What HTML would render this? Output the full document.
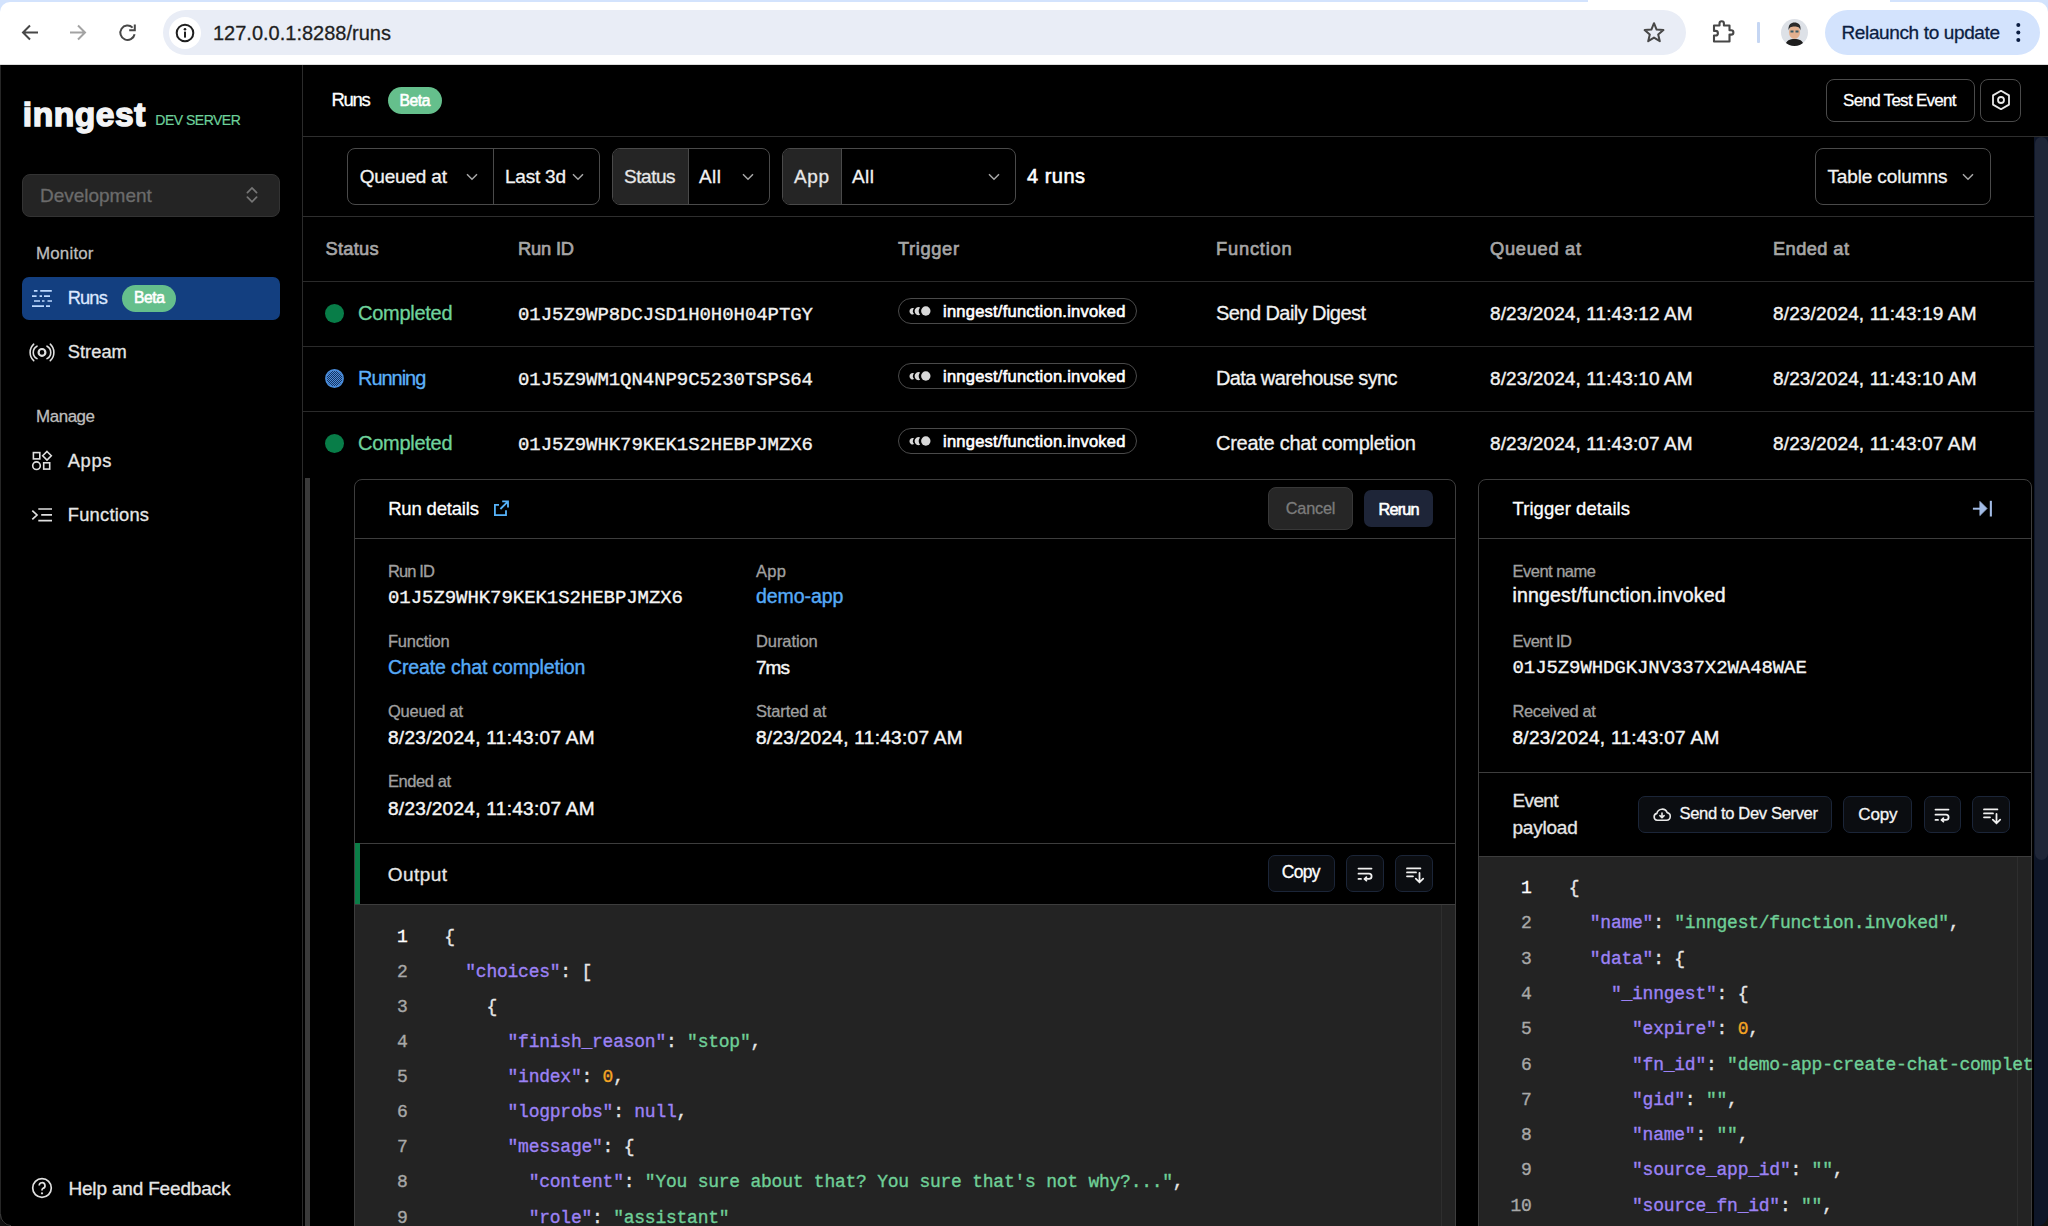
<!DOCTYPE html>
<html><head><meta charset="utf-8"><title>Runs</title>
<style>
html,body{margin:0;padding:0;background:#000;width:2048px;height:1226px;overflow:hidden;}
body{position:relative;font-family:"Liberation Sans",sans-serif;}
.t{position:absolute;white-space:pre;}
</style></head><body>
<div style="position:absolute;left:0px;top:0px;width:2048px;height:14px;background:#d3e3fd"></div>
<div style="position:absolute;left:0px;top:1.5px;width:2048px;height:63.5px;background:#fff;border-radius:10px 10px 0 0"></div>
<div style="position:absolute;left:1588px;top:0px;width:302px;height:6px;background:#fff"></div>
<div style="position:absolute;left:0px;top:64px;width:2048px;height:1px;background:#dcdcdc"></div>
<svg style="position:absolute;left:20px;top:22px;overflow:visible" width="20" height="20" viewBox="0 0 20 20"><path d="M18 10.5H3.5M10 3.5L3 10.5L10 17.5" fill="none" stroke="#474747" stroke-width="2"/></svg>
<svg style="position:absolute;left:68px;top:22px;overflow:visible" width="20" height="20" viewBox="0 0 20 20"><path d="M2 10.5H16.5M10 3.5L17 10.5L10 17.5" fill="none" stroke="#a3a3a3" stroke-width="2"/></svg>
<svg style="position:absolute;left:117px;top:22px;overflow:visible" width="22" height="22" viewBox="0 0 22 22"><path d="M17.6 12.2A7.2 7.2 0 1 1 15.6 5.6" fill="none" stroke="#474747" stroke-width="2"/><path d="M17.8 2.5V8.2H12.2" fill="none" stroke="#474747" stroke-width="2"/></svg>
<div style="position:absolute;left:163px;top:10px;width:1523px;height:45px;background:#e9edf6;border-radius:23px"></div>
<div style="position:absolute;left:169px;top:16.5px;width:32px;height:32px;background:#fff;border-radius:50%"></div>
<svg style="position:absolute;left:175px;top:22.5px;overflow:visible" width="20" height="20" viewBox="0 0 20 20"><circle cx="10" cy="10" r="8.3" fill="none" stroke="#1f1f1f" stroke-width="2"/><circle cx="10" cy="6.3" r="1.3" fill="#1f1f1f"/><rect x="9" y="8.6" width="2" height="6" fill="#1f1f1f"/></svg>
<svg style="position:absolute;left:1642px;top:21px;overflow:visible" width="24" height="22" viewBox="0 0 24 22"><path d="M12 2.2L14.6 8.6L21.4 9.1L16.2 13.5L17.8 20.2L12 16.6L6.2 20.2L7.8 13.5L2.6 9.1L9.4 8.6Z" fill="none" stroke="#474747" stroke-width="2" stroke-linejoin="round"/></svg>
<svg style="position:absolute;left:1711px;top:19px;overflow:visible" width="26" height="25" viewBox="0 0 26 25"><path d="M3 6.5H8.5V4.5A2.2 2.2 0 0 1 12.9 4.5V6.5H18.5V11.2H20.2A2.2 2.2 0 0 1 20.2 15.6H18.5V22.5H3V16.5H4.6A2.3 2.3 0 0 0 4.6 11.9H3Z" fill="none" stroke="#474747" stroke-width="2.1" stroke-linejoin="round"/></svg>
<div style="position:absolute;left:1757px;top:22px;width:2.5px;height:21px;background:#c5d6f3;border-radius:1px"></div>
<svg style="position:absolute;left:1781px;top:19px;overflow:visible" width="27" height="27" viewBox="0 0 27 27"><defs><clipPath id="av"><circle cx="13.5" cy="13.5" r="13.5"/></clipPath></defs><g clip-path="url(#av)"><rect width="27" height="27" fill="#dde1e7"/><path d="M4 27C5 21 9 20 13.5 20S22 21 23 27Z" fill="#1e1e1e"/><ellipse cx="13.5" cy="13" rx="5.6" ry="7" fill="#e3b08f"/><path d="M7.6 11.5C7 5.5 10 3.6 13.5 3.6S20.4 5.5 19.4 11.5C18.6 8.5 17 7.6 13.5 7.6S8.4 8.5 7.6 11.5Z" fill="#2a2a2a"/><rect x="9.5" y="11.5" width="3" height="2" fill="#3a5a66"/><rect x="14.5" y="11.5" width="3" height="2" fill="#3a5a66"/></g></svg>
<div style="position:absolute;left:1825px;top:10px;width:215px;height:45px;background:#d3e3fd;border-radius:23px"></div>
<svg style="position:absolute;left:2013px;top:24px;overflow:visible" width="10" height="18" viewBox="0 0 10 18"><circle cx="5.3" cy="1" r="2" fill="#0b1d41"/><circle cx="5.3" cy="8.6" r="2" fill="#0b1d41"/><circle cx="5.3" cy="16" r="2" fill="#0b1d41"/></svg>
<div style="position:absolute;left:0px;top:65px;width:1px;height:1161px;background:#262626"></div>
<div style="position:absolute;left:302px;top:65px;width:1px;height:1161px;background:#2b2b2b"></div>
<div style="position:absolute;left:22px;top:173.5px;width:258px;height:43px;background:#242424;border:1px solid #333333;border-radius:8px;box-sizing:border-box"></div>
<svg style="position:absolute;left:244px;top:185px;overflow:visible" width="16" height="20" viewBox="0 0 16 20"><path d="M3.4 7.6L8 3L12.6 7.6M3.4 12.2L8 16.8L12.6 12.2" fill="none" stroke="#767676" stroke-width="1.7" stroke-linecap="round"/></svg>
<div style="position:absolute;left:22px;top:276.5px;width:258px;height:43px;background:#133f80;border-radius:7px"></div>
<svg style="position:absolute;left:30px;top:288px;overflow:visible" width="24" height="22" viewBox="0 0 24 22"><g stroke="#bcd9ff" stroke-width="1.7"><path d="M3.9 2.8H7.5M10.2 2.8H21.8M2 8.2H6.6M9.6 8.2H12M14 8.2H20M4 13H10M12 13H14.5M17.5 13H22M2 18.2H14M16 18.2H20"/></g></svg>
<div style="position:absolute;left:122.3px;top:284.6px;width:54px;height:27px;background:#65bf8c;border-radius:14px"></div>
<svg style="position:absolute;left:28px;top:343px;overflow:visible" width="28" height="20" viewBox="0 0 28 20"><g fill="none" stroke="#e0e0e0" stroke-linecap="round"><circle cx="14" cy="9.4" r="3.4" stroke-width="2.2"/><path stroke-width="1.6" d="M5.7 1.2A11.2 11.2 0 0 0 5.7 17.6M22.3 1.2A11.2 11.2 0 0 1 22.3 17.6M9 3.2A7 7 0 0 0 9 15.6M19 3.2A7 7 0 0 1 19 15.6"/></g></svg>
<svg style="position:absolute;left:31px;top:450px;overflow:visible" width="22" height="22" viewBox="0 0 22 22"><g fill="none" stroke="#e0e0e0" stroke-width="1.6"><rect x="2.4" y="2.6" width="6.4" height="6.3"/><circle cx="5.5" cy="15.7" r="3.8"/><rect x="12.7" y="12.8" width="6" height="6.3"/><path d="M16 1.5L20.3 5.8L16 10.1L11.7 5.8Z"/></g></svg>
<svg style="position:absolute;left:30px;top:506px;overflow:visible" width="24" height="18" viewBox="0 0 24 18"><g fill="none" stroke="#e0e0e0" stroke-width="1.7"><path d="M2.3 4.6L7 9L2.3 13.4M8.3 3H22M11.2 8.8H22M8.3 14.7H22"/></g></svg>
<svg style="position:absolute;left:30px;top:1176px;overflow:visible" width="24" height="24" viewBox="0 0 24 24"><g fill="none" stroke="#e0e0e0" stroke-width="1.7"><circle cx="12" cy="12" r="9.3"/><path d="M9.2 9.6A2.9 2.9 0 1 1 12.9 12.4C12.3 12.7 12 13.2 12 13.9V14.6"/></g><circle cx="12" cy="17.3" r="1.1" fill="#e0e0e0"/></svg>
<div style="position:absolute;left:387.5px;top:87px;width:54.5px;height:26.5px;background:#65bf8c;border-radius:14px"></div>
<div style="position:absolute;left:1825.5px;top:79px;width:149px;height:43px;border:1px solid #4a4a4a;border-radius:8px;box-sizing:border-box"></div>
<div style="position:absolute;left:1980.3px;top:79px;width:40.5px;height:43px;border:1px solid #4a4a4a;border-radius:8px;box-sizing:border-box"></div>
<svg style="position:absolute;left:1990px;top:89px;overflow:visible" width="22" height="22" viewBox="0 0 22 22"><g fill="none" stroke="#e8e8e8" stroke-width="1.8"><path d="M11 1.8L19 6.4V15.6L11 20.2L3 15.6V6.4Z" stroke-linejoin="round"/><circle cx="11" cy="11" r="3"/></g></svg>
<div style="position:absolute;left:303px;top:135.5px;width:1745px;height:1px;background:#2e2e2e"></div>
<div style="position:absolute;left:347px;top:148px;width:253px;height:57px;border:1px solid #4a4a4a;border-radius:8px;box-sizing:border-box"></div>
<div style="position:absolute;left:493px;top:149px;width:1px;height:55px;background:#4a4a4a"></div>
<svg style="position:absolute;left:465.5px;top:172.5px;overflow:visible" width="12" height="8" viewBox="0 0 12 8"><path d="M1 1.2L6 6.2L11 1.2" fill="none" stroke="#a8a8a8" stroke-width="1.5"/></svg>
<svg style="position:absolute;left:572px;top:172.5px;overflow:visible" width="12" height="8" viewBox="0 0 12 8"><path d="M1 1.2L6 6.2L11 1.2" fill="none" stroke="#a8a8a8" stroke-width="1.5"/></svg>
<div style="position:absolute;left:612px;top:148px;width:158px;height:57px;border:1px solid #4a4a4a;border-radius:8px;box-sizing:border-box"></div>
<div style="position:absolute;left:613px;top:149px;width:74.5px;height:55px;background:#252525;border-radius:7px 0 0 7px"></div>
<div style="position:absolute;left:687.5px;top:149px;width:1px;height:55px;background:#4a4a4a"></div>
<svg style="position:absolute;left:741.5px;top:172.5px;overflow:visible" width="12" height="8" viewBox="0 0 12 8"><path d="M1 1.2L6 6.2L11 1.2" fill="none" stroke="#a8a8a8" stroke-width="1.5"/></svg>
<div style="position:absolute;left:782px;top:148px;width:234px;height:57px;border:1px solid #4a4a4a;border-radius:8px;box-sizing:border-box"></div>
<div style="position:absolute;left:783px;top:149px;width:58px;height:55px;background:#252525;border-radius:7px 0 0 7px"></div>
<div style="position:absolute;left:841px;top:149px;width:1px;height:55px;background:#4a4a4a"></div>
<svg style="position:absolute;left:987.5px;top:172.5px;overflow:visible" width="12" height="8" viewBox="0 0 12 8"><path d="M1 1.2L6 6.2L11 1.2" fill="none" stroke="#a8a8a8" stroke-width="1.5"/></svg>
<div style="position:absolute;left:1815px;top:148px;width:176px;height:57px;border:1px solid #4a4a4a;border-radius:8px;box-sizing:border-box"></div>
<svg style="position:absolute;left:1962px;top:172.5px;overflow:visible" width="12" height="8" viewBox="0 0 12 8"><path d="M1 1.2L6 6.2L11 1.2" fill="none" stroke="#a8a8a8" stroke-width="1.5"/></svg>
<div style="position:absolute;left:303px;top:216px;width:1731px;height:1px;background:#2e2e2e"></div>
<div style="position:absolute;left:2034px;top:137px;width:14px;height:1089px;background:#0e1628"></div>
<div style="position:absolute;left:2035px;top:137px;width:13px;height:723px;background:#1f2637;border-radius:7px"></div>
<div style="position:absolute;left:303px;top:281px;width:1731px;height:1px;background:#2a2a2a"></div>
<div style="position:absolute;left:303px;top:345.5px;width:1731px;height:1px;background:#2a2a2a"></div>
<div style="position:absolute;left:303px;top:411px;width:1731px;height:1px;background:#2a2a2a"></div>
<div style="position:absolute;left:325px;top:304px;width:19px;height:19px;background:#087d48;border-radius:50%"></div>
<div style="position:absolute;left:897.6px;top:298px;width:239.6px;height:26.3px;border:1px solid #4a4a4a;border-radius:14px;box-sizing:border-box"></div>
<svg style="position:absolute;left:907px;top:303px;overflow:visible" width="26" height="16" viewBox="0 0 26 16"><g fill="#d8d8d8"><path d="M7 5.3A3.2 3.2 0 1 0 7 11.1A4.5 4.5 0 0 1 7 5.3Z"/><path d="M13.1 4.4A4 4 0 1 0 13.1 11.8A5.5 5.5 0 0 1 13.1 4.4Z"/><circle cx="18.8" cy="8" r="4.7"/></g></svg>
<svg style="position:absolute;left:325px;top:369px;overflow:visible" width="19" height="19" viewBox="0 0 19 19"><defs><pattern id="dp" width="2" height="2" patternUnits="userSpaceOnUse"><rect width="2" height="2" fill="#17335f"/><rect width="1" height="1" fill="#4a8ddc"/><rect x="1" y="1" width="1" height="1" fill="#4a8ddc"/></pattern></defs><circle cx="9.5" cy="9.5" r="8.6" fill="url(#dp)" stroke="#4a8ddc" stroke-width="1.6"/></svg>
<div style="position:absolute;left:897.6px;top:363px;width:239.6px;height:26.3px;border:1px solid #4a4a4a;border-radius:14px;box-sizing:border-box"></div>
<svg style="position:absolute;left:907px;top:368px;overflow:visible" width="26" height="16" viewBox="0 0 26 16"><g fill="#d8d8d8"><path d="M7 5.3A3.2 3.2 0 1 0 7 11.1A4.5 4.5 0 0 1 7 5.3Z"/><path d="M13.1 4.4A4 4 0 1 0 13.1 11.8A5.5 5.5 0 0 1 13.1 4.4Z"/><circle cx="18.8" cy="8" r="4.7"/></g></svg>
<div style="position:absolute;left:325px;top:434px;width:19px;height:19px;background:#087d48;border-radius:50%"></div>
<div style="position:absolute;left:897.6px;top:428px;width:239.6px;height:26.3px;border:1px solid #4a4a4a;border-radius:14px;box-sizing:border-box"></div>
<svg style="position:absolute;left:907px;top:433px;overflow:visible" width="26" height="16" viewBox="0 0 26 16"><g fill="#d8d8d8"><path d="M7 5.3A3.2 3.2 0 1 0 7 11.1A4.5 4.5 0 0 1 7 5.3Z"/><path d="M13.1 4.4A4 4 0 1 0 13.1 11.8A5.5 5.5 0 0 1 13.1 4.4Z"/><circle cx="18.8" cy="8" r="4.7"/></g></svg>
<div style="position:absolute;left:305px;top:478px;width:5px;height:748px;background:#3a3a3a"></div>
<div style="position:absolute;left:354px;top:478.5px;width:1102px;height:900px;border:1px solid #3d3d3d;border-radius:8px;box-sizing:border-box"></div>
<div style="position:absolute;left:354px;top:538px;width:1102px;height:1px;background:#3d3d3d"></div>
<svg style="position:absolute;left:491px;top:498px;overflow:visible" width="20" height="20" viewBox="0 0 20 20"><g fill="none" stroke="#57b4fb" stroke-width="1.8"><path d="M8 6.9H3.9V17.2H15V12.2"/><path d="M11.2 3.4H17V9.4M16.8 3.6L9.4 11"/></g></svg>
<div style="position:absolute;left:1268px;top:487.4px;width:85px;height:43px;background:#262626;border:1px solid #383838;border-radius:8px;box-sizing:border-box"></div>
<div style="position:absolute;left:1364px;top:489.8px;width:69px;height:37.6px;background:#1e2538;border-radius:7px"></div>
<div style="position:absolute;left:354px;top:842.5px;width:1102px;height:1px;background:#3d3d3d"></div>
<div style="position:absolute;left:354.5px;top:843px;width:5.5px;height:61px;background:#0b7d47"></div>
<div style="position:absolute;left:1267.6px;top:854.8px;width:67.7px;height:37.4px;background:#0b0d11;border:1px solid #1b2538;border-radius:7px;box-sizing:border-box"></div>
<div style="position:absolute;left:1346.3px;top:854.8px;width:37.7px;height:37.4px;background:#0b0d11;border:1px solid #1b2538;border-radius:7px;box-sizing:border-box"></div>
<svg style="position:absolute;left:1356px;top:865px;overflow:visible" width="18" height="18" viewBox="0 0 18 18"><g fill="none" stroke="#f0f0f0" stroke-width="1.8" stroke-linecap="round"><path d="M2.5 3.6H15.5M2.5 8.7H13A2.6 2.6 0 0 1 13 13.9H9"/><path d="M2.5 13.9H5"/><path d="M10.4 12.2L8.6 13.9L10.4 15.6"/></g></svg>
<div style="position:absolute;left:1395px;top:854.8px;width:38px;height:37.4px;background:#0b0d11;border:1px solid #1b2538;border-radius:7px;box-sizing:border-box"></div>
<svg style="position:absolute;left:1405px;top:865px;overflow:visible" width="20" height="20" viewBox="0 0 20 20"><g fill="none" stroke="#f0f0f0" stroke-width="1.8" stroke-linecap="round"><path d="M2 3.4H15.4M2 7.4H11M2 11.3H8"/><path d="M14.5 8V17M10.8 13.6L14.5 17.3L18.2 13.6"/></g></svg>
<div style="position:absolute;left:354px;top:903.5px;width:1102px;height:1px;background:#3d3d3d"></div>
<div style="position:absolute;left:355px;top:904.5px;width:1100px;height:330px;background:#232323"></div>
<div style="position:absolute;left:1441px;top:904.5px;width:1px;height:330px;background:#2e2e2e"></div>
<div style="position:absolute;left:1478.3px;top:479px;width:554px;height:900px;border:1px solid #3d3d3d;border-radius:8px;box-sizing:border-box"></div>
<div style="position:absolute;left:1478.3px;top:538px;width:554px;height:1px;background:#3d3d3d"></div>
<svg style="position:absolute;left:1970px;top:498px;overflow:visible" width="24" height="22" viewBox="0 0 24 22"><g fill="#a3bce6" stroke="#a3bce6"><path d="M2.9 10.7H10.5" stroke-width="2"/><path d="M9.9 3.4L17 10.5L9.9 17.6Z" stroke-width="0.8" stroke-linejoin="round"/><path d="M20.85 2.8V18.5" stroke-width="2.1"/></g></svg>
<div style="position:absolute;left:1478.3px;top:772px;width:554px;height:1px;background:#3d3d3d"></div>
<div style="position:absolute;left:1638px;top:795.5px;width:194px;height:37.4px;background:#0b0d11;border:1px solid #1b2538;border-radius:7px;box-sizing:border-box"></div>
<svg style="position:absolute;left:1652px;top:805px;overflow:visible" width="20" height="18" viewBox="0 0 20 18"><g fill="none" stroke="#e8e8e8" stroke-width="1.6" stroke-linecap="round" stroke-linejoin="round"><path d="M5.2 15.3H14.6A3.9 3.9 0 0 0 15.2 7.6A5.4 5.4 0 0 0 4.9 8.4A3.5 3.5 0 0 0 5.2 15.3Z"/><path d="M10 8V12.6M7.9 10.6L10 12.7L12.1 10.6"/></g></svg>
<div style="position:absolute;left:1843.4px;top:795.5px;width:68.4px;height:37.4px;background:#0b0d11;border:1px solid #1b2538;border-radius:7px;box-sizing:border-box"></div>
<div style="position:absolute;left:1923.6px;top:795.5px;width:37px;height:37.4px;background:#0b0d11;border:1px solid #1b2538;border-radius:7px;box-sizing:border-box"></div>
<svg style="position:absolute;left:1933px;top:806px;overflow:visible" width="18" height="18" viewBox="0 0 18 18"><g fill="none" stroke="#f0f0f0" stroke-width="1.8" stroke-linecap="round"><path d="M2.5 3.6H15.5M2.5 8.7H13A2.6 2.6 0 0 1 13 13.9H9"/><path d="M2.5 13.9H5"/><path d="M10.4 12.2L8.6 13.9L10.4 15.6"/></g></svg>
<div style="position:absolute;left:1972px;top:795.5px;width:37.5px;height:37.4px;background:#0b0d11;border:1px solid #1b2538;border-radius:7px;box-sizing:border-box"></div>
<svg style="position:absolute;left:1982px;top:806px;overflow:visible" width="20" height="20" viewBox="0 0 20 20"><g fill="none" stroke="#f0f0f0" stroke-width="1.8" stroke-linecap="round"><path d="M2 3.4H15.4M2 7.4H11M2 11.3H8"/><path d="M14.5 8V17M10.8 13.6L14.5 17.3L18.2 13.6"/></g></svg>
<div style="position:absolute;left:1478.3px;top:855.5px;width:554px;height:1px;background:#3d3d3d"></div>
<div style="position:absolute;left:1479.3px;top:856.5px;width:552px;height:370px;background:#232323"></div>
<div style="position:absolute;left:2017px;top:856.5px;width:1px;height:370px;background:#2e2e2e"></div>
<svg style="position:absolute;left:0px;top:1214px;overflow:visible" width="14" height="12" viewBox="0 0 14 12"><path d="M0 0V1A11 11 0 0 0 11 12H0Z" fill="#121212"/><path d="M0.6 0V1A11 11 0 0 0 11 11.6" fill="none" stroke="#3a3a3a" stroke-width="1"/></svg>
<svg style="position:absolute;left:2036px;top:1214px;overflow:visible" width="12" height="12" viewBox="0 0 12 12"><path d="M12 0V1A11 11 0 0 1 1 12H12Z" fill="#121212"/></svg>
<span class="t" style="left:213.00px;top:22.87px;font-size:20px;line-height:20px;color:#1f1f1f;-webkit-text-stroke:0.3px #1f1f1f;">127.0.0.1:8288/runs</span>
<span class="t" style="left:1841.50px;top:23.02px;font-size:19px;line-height:19px;color:#0b1d41;letter-spacing:-0.370px;-webkit-text-stroke:0.3px #0b1d41;">Relaunch to update</span>
<span class="t" style="left:22.80px;top:98.24px;font-size:33.5px;line-height:33.5px;color:#f3f4f6;font-weight:700;letter-spacing:0.562px;-webkit-text-stroke:1.5px #f3f4f6;">inngest</span>
<span class="t" style="left:155.30px;top:113.05px;font-size:14px;line-height:14px;color:#6dd09a;letter-spacing:-0.500px;-webkit-text-stroke:0.2px #6dd09a;">DEV SERVER</span>
<span class="t" style="left:40.00px;top:186.22px;font-size:19px;line-height:19px;color:#6b6b6b;letter-spacing:-0.015px;-webkit-text-stroke:0.3px #6b6b6b;">Development</span>
<span class="t" style="left:36.00px;top:246.29px;font-size:16.9px;line-height:16.9px;color:#bdbdbd;letter-spacing:0.195px;-webkit-text-stroke:0.3px #bdbdbd;">Monitor</span>
<span class="t" style="left:67.80px;top:288.91px;font-size:18.3px;line-height:18.3px;color:#dce8ff;letter-spacing:-0.896px;-webkit-text-stroke:0.3px #dce8ff;">Runs</span>
<span class="t" style="left:133.90px;top:290.39px;font-size:15.6px;line-height:15.6px;color:#ffffff;letter-spacing:-0.365px;-webkit-text-stroke:0.6px #ffffff;">Beta</span>
<span class="t" style="left:67.80px;top:343.11px;font-size:18.3px;line-height:18.3px;color:#e6e6e6;letter-spacing:0.013px;-webkit-text-stroke:0.3px #e6e6e6;">Stream</span>
<span class="t" style="left:36.00px;top:408.69px;font-size:16.9px;line-height:16.9px;color:#bdbdbd;letter-spacing:-0.409px;-webkit-text-stroke:0.3px #bdbdbd;">Manage</span>
<span class="t" style="left:67.80px;top:451.51px;font-size:18.3px;line-height:18.3px;color:#e6e6e6;letter-spacing:0.609px;-webkit-text-stroke:0.3px #e6e6e6;">Apps</span>
<span class="t" style="left:67.80px;top:505.81px;font-size:18.3px;line-height:18.3px;color:#e6e6e6;letter-spacing:0.242px;-webkit-text-stroke:0.3px #e6e6e6;">Functions</span>
<span class="t" style="left:68.40px;top:1178.62px;font-size:19px;line-height:19px;color:#e6e6e6;letter-spacing:-0.174px;-webkit-text-stroke:0.3px #e6e6e6;">Help and Feedback</span>
<span class="t" style="left:331.60px;top:91.34px;font-size:18.5px;line-height:18.5px;color:#ffffff;letter-spacing:-1.334px;-webkit-text-stroke:0.3px #ffffff;">Runs</span>
<span class="t" style="left:399.50px;top:92.59px;font-size:15.6px;line-height:15.6px;color:#ffffff;letter-spacing:-0.365px;-webkit-text-stroke:0.6px #ffffff;">Beta</span>
<span class="t" style="left:1843.00px;top:91.61px;font-size:17px;line-height:17px;color:#ffffff;letter-spacing:-0.707px;-webkit-text-stroke:0.3px #ffffff;">Send Test Event</span>
<span class="t" style="left:359.70px;top:166.62px;font-size:19px;line-height:19px;color:#f2f2f2;letter-spacing:-0.181px;-webkit-text-stroke:0.3px #f2f2f2;">Queued at</span>
<span class="t" style="left:505.00px;top:166.62px;font-size:19px;line-height:19px;color:#f2f2f2;letter-spacing:-0.221px;-webkit-text-stroke:0.3px #f2f2f2;">Last 3d</span>
<span class="t" style="left:624.00px;top:166.62px;font-size:19px;line-height:19px;color:#e8e8e8;letter-spacing:-0.455px;-webkit-text-stroke:0.3px #e8e8e8;">Status</span>
<span class="t" style="left:699.00px;top:166.62px;font-size:19px;line-height:19px;color:#f2f2f2;letter-spacing:0.438px;-webkit-text-stroke:0.3px #f2f2f2;">All</span>
<span class="t" style="left:794.00px;top:166.62px;font-size:19px;line-height:19px;color:#e8e8e8;letter-spacing:0.594px;-webkit-text-stroke:0.3px #e8e8e8;">App</span>
<span class="t" style="left:852.00px;top:166.62px;font-size:19px;line-height:19px;color:#f2f2f2;letter-spacing:0.438px;-webkit-text-stroke:0.3px #f2f2f2;">All</span>
<span class="t" style="left:1027.00px;top:165.77px;font-size:20px;line-height:20px;color:#ffffff;letter-spacing:0.481px;-webkit-text-stroke:0.55px #ffffff;">4 runs</span>
<span class="t" style="left:1827.40px;top:166.62px;font-size:19px;line-height:19px;color:#f2f2f2;letter-spacing:-0.121px;-webkit-text-stroke:0.3px #f2f2f2;">Table columns</span>
<span class="t" style="left:325.60px;top:239.91px;font-size:18.3px;line-height:18.3px;color:#a6a6a6;letter-spacing:0.234px;-webkit-text-stroke:0.65px #a6a6a6;">Status</span>
<span class="t" style="left:518.00px;top:239.91px;font-size:18.3px;line-height:18.3px;color:#a6a6a6;letter-spacing:-0.181px;-webkit-text-stroke:0.65px #a6a6a6;">Run ID</span>
<span class="t" style="left:898.00px;top:239.91px;font-size:18.3px;line-height:18.3px;color:#a6a6a6;letter-spacing:0.628px;-webkit-text-stroke:0.65px #a6a6a6;">Trigger</span>
<span class="t" style="left:1216.00px;top:239.91px;font-size:18.3px;line-height:18.3px;color:#a6a6a6;letter-spacing:0.796px;-webkit-text-stroke:0.65px #a6a6a6;">Function</span>
<span class="t" style="left:1490.00px;top:239.91px;font-size:18.3px;line-height:18.3px;color:#a6a6a6;letter-spacing:0.701px;-webkit-text-stroke:0.65px #a6a6a6;">Queued at</span>
<span class="t" style="left:1773.00px;top:239.91px;font-size:18.3px;line-height:18.3px;color:#a6a6a6;letter-spacing:0.402px;-webkit-text-stroke:0.65px #a6a6a6;">Ended at</span>
<span class="t" style="left:358.00px;top:303.27px;font-size:20px;line-height:20px;color:#6fd39c;letter-spacing:-0.277px;-webkit-text-stroke:0.3px #6fd39c;">Completed</span>
<span class="t" style="left:518.00px;top:306.24px;font-size:19px;line-height:19px;color:#f2f2f2;font-family:'Liberation Mono',monospace;letter-spacing:-0.058px;-webkit-text-stroke:0.35px #f2f2f2;">01J5Z9WP8DCJSD1H0H0H04PTGY</span>
<span class="t" style="left:943.00px;top:302.83px;font-size:16.5px;line-height:16.5px;color:#ffffff;letter-spacing:0.233px;-webkit-text-stroke:0.6px #ffffff;">inngest/function.invoked</span>
<span class="t" style="left:1216.00px;top:303.27px;font-size:20px;line-height:20px;color:#f2f2f2;letter-spacing:-0.561px;-webkit-text-stroke:0.3px #f2f2f2;">Send Daily Digest</span>
<span class="t" style="left:1490.00px;top:303.82px;font-size:19px;line-height:19px;color:#f2f2f2;letter-spacing:0.106px;-webkit-text-stroke:0.4px #f2f2f2;">8/23/2024, 11:43:12 AM</span>
<span class="t" style="left:1773.00px;top:303.82px;font-size:19px;line-height:19px;color:#f2f2f2;letter-spacing:0.149px;-webkit-text-stroke:0.4px #f2f2f2;">8/23/2024, 11:43:19 AM</span>
<span class="t" style="left:358.00px;top:368.27px;font-size:20px;line-height:20px;color:#5cb0f8;letter-spacing:-1.036px;-webkit-text-stroke:0.3px #5cb0f8;">Running</span>
<span class="t" style="left:518.00px;top:371.24px;font-size:19px;line-height:19px;color:#f2f2f2;font-family:'Liberation Mono',monospace;letter-spacing:-0.058px;-webkit-text-stroke:0.35px #f2f2f2;">01J5Z9WM1QN4NP9C5230TSPS64</span>
<span class="t" style="left:943.00px;top:367.83px;font-size:16.5px;line-height:16.5px;color:#ffffff;letter-spacing:0.233px;-webkit-text-stroke:0.6px #ffffff;">inngest/function.invoked</span>
<span class="t" style="left:1216.00px;top:368.27px;font-size:20px;line-height:20px;color:#f2f2f2;letter-spacing:-0.596px;-webkit-text-stroke:0.3px #f2f2f2;">Data warehouse sync</span>
<span class="t" style="left:1490.00px;top:368.82px;font-size:19px;line-height:19px;color:#f2f2f2;letter-spacing:0.106px;-webkit-text-stroke:0.4px #f2f2f2;">8/23/2024, 11:43:10 AM</span>
<span class="t" style="left:1773.00px;top:368.82px;font-size:19px;line-height:19px;color:#f2f2f2;letter-spacing:0.149px;-webkit-text-stroke:0.4px #f2f2f2;">8/23/2024, 11:43:10 AM</span>
<span class="t" style="left:358.00px;top:433.27px;font-size:20px;line-height:20px;color:#6fd39c;letter-spacing:-0.277px;-webkit-text-stroke:0.3px #6fd39c;">Completed</span>
<span class="t" style="left:518.00px;top:436.24px;font-size:19px;line-height:19px;color:#f2f2f2;font-family:'Liberation Mono',monospace;letter-spacing:-0.058px;-webkit-text-stroke:0.35px #f2f2f2;">01J5Z9WHK79KEK1S2HEBPJMZX6</span>
<span class="t" style="left:943.00px;top:432.83px;font-size:16.5px;line-height:16.5px;color:#ffffff;letter-spacing:0.233px;-webkit-text-stroke:0.6px #ffffff;">inngest/function.invoked</span>
<span class="t" style="left:1216.00px;top:433.27px;font-size:20px;line-height:20px;color:#f2f2f2;letter-spacing:-0.270px;-webkit-text-stroke:0.3px #f2f2f2;">Create chat completion</span>
<span class="t" style="left:1490.00px;top:433.82px;font-size:19px;line-height:19px;color:#f2f2f2;letter-spacing:0.106px;-webkit-text-stroke:0.4px #f2f2f2;">8/23/2024, 11:43:07 AM</span>
<span class="t" style="left:1773.00px;top:433.82px;font-size:19px;line-height:19px;color:#f2f2f2;letter-spacing:0.149px;-webkit-text-stroke:0.4px #f2f2f2;">8/23/2024, 11:43:07 AM</span>
<span class="t" style="left:388.20px;top:499.64px;font-size:18.5px;line-height:18.5px;color:#ffffff;letter-spacing:-0.176px;-webkit-text-stroke:0.3px #ffffff;">Run details</span>
<span class="t" style="left:1285.80px;top:500.20px;font-size:16.3px;line-height:16.3px;color:#7c7c7c;letter-spacing:-0.197px;-webkit-text-stroke:0.3px #7c7c7c;">Cancel</span>
<span class="t" style="left:1378.50px;top:500.70px;font-size:16.3px;line-height:16.3px;color:#ffffff;letter-spacing:-0.840px;-webkit-text-stroke:0.6px #ffffff;">Rerun</span>
<span class="t" style="left:388.00px;top:563.33px;font-size:16.5px;line-height:16.5px;color:#a0a0a0;letter-spacing:-0.872px;-webkit-text-stroke:0.3px #a0a0a0;">Run ID</span>
<span class="t" style="left:388.00px;top:589.04px;font-size:19px;line-height:19px;color:#f5f5f5;font-family:'Liberation Mono',monospace;letter-spacing:-0.058px;-webkit-text-stroke:0.35px #f5f5f5;">01J5Z9WHK79KEK1S2HEBPJMZX6</span>
<span class="t" style="left:756.00px;top:563.33px;font-size:16.5px;line-height:16.5px;color:#a0a0a0;letter-spacing:0.320px;-webkit-text-stroke:0.3px #a0a0a0;">App</span>
<span class="t" style="left:756.00px;top:586.79px;font-size:19.5px;line-height:19.5px;color:#56aaf6;letter-spacing:-0.059px;-webkit-text-stroke:0.4px #56aaf6;">demo-app</span>
<span class="t" style="left:388.00px;top:633.33px;font-size:16.5px;line-height:16.5px;color:#a0a0a0;letter-spacing:-0.228px;-webkit-text-stroke:0.3px #a0a0a0;">Function</span>
<span class="t" style="left:388.00px;top:657.64px;font-size:19.5px;line-height:19.5px;color:#56aaf6;letter-spacing:-0.149px;-webkit-text-stroke:0.4px #56aaf6;">Create chat completion</span>
<span class="t" style="left:756.00px;top:633.33px;font-size:16.5px;line-height:16.5px;color:#a0a0a0;letter-spacing:-0.082px;-webkit-text-stroke:0.3px #a0a0a0;">Duration</span>
<span class="t" style="left:756.00px;top:657.87px;font-size:19px;line-height:19px;color:#f5f5f5;letter-spacing:-0.953px;-webkit-text-stroke:0.45px #f5f5f5;">7ms</span>
<span class="t" style="left:388.00px;top:703.33px;font-size:16.5px;line-height:16.5px;color:#a0a0a0;letter-spacing:-0.258px;-webkit-text-stroke:0.3px #a0a0a0;">Queued at</span>
<span class="t" style="left:388.00px;top:728.22px;font-size:19px;line-height:19px;color:#f5f5f5;letter-spacing:0.296px;-webkit-text-stroke:0.45px #f5f5f5;">8/23/2024, 11:43:07 AM</span>
<span class="t" style="left:756.00px;top:703.33px;font-size:16.5px;line-height:16.5px;color:#a0a0a0;letter-spacing:-0.139px;-webkit-text-stroke:0.3px #a0a0a0;">Started at</span>
<span class="t" style="left:756.00px;top:728.22px;font-size:19px;line-height:19px;color:#f5f5f5;letter-spacing:0.296px;-webkit-text-stroke:0.45px #f5f5f5;">8/23/2024, 11:43:07 AM</span>
<span class="t" style="left:388.00px;top:773.33px;font-size:16.5px;line-height:16.5px;color:#a0a0a0;letter-spacing:-0.438px;-webkit-text-stroke:0.3px #a0a0a0;">Ended at</span>
<span class="t" style="left:388.00px;top:798.57px;font-size:19px;line-height:19px;color:#f5f5f5;letter-spacing:0.296px;-webkit-text-stroke:0.45px #f5f5f5;">8/23/2024, 11:43:07 AM</span>
<span class="t" style="left:387.70px;top:865.12px;font-size:19px;line-height:19px;color:#e6e6e6;letter-spacing:0.451px;-webkit-text-stroke:0.3px #e6e6e6;">Output</span>
<span class="t" style="left:1281.80px;top:864.49px;font-size:17.5px;line-height:17.5px;color:#ffffff;letter-spacing:-0.720px;-webkit-text-stroke:0.3px #ffffff;">Copy</span>
<span class="t" style="left:396.94px;top:927.51px;font-size:18px;line-height:18px;color:#ffffff;font-family:'Liberation Mono',monospace;-webkit-text-stroke:0.35px #ffffff;letter-spacing:-0.240px;">1</span>
<span class="t" style="left:444.20px;top:927.51px;font-size:18px;line-height:18px;color:#e6e6e6;font-family:'Liberation Mono',monospace;-webkit-text-stroke:0.35px #e6e6e6;letter-spacing:-0.240px;">{</span>
<span class="t" style="left:396.94px;top:962.65px;font-size:18px;line-height:18px;color:#a8a8a8;font-family:'Liberation Mono',monospace;-webkit-text-stroke:0.35px #a8a8a8;letter-spacing:-0.240px;">2</span>
<span class="t" style="left:444.20px;top:962.65px;font-size:18px;line-height:18px;color:#e6e6e6;font-family:'Liberation Mono',monospace;-webkit-text-stroke:0.35px #e6e6e6;letter-spacing:-0.240px;">  </span>
<span class="t" style="left:465.32px;top:962.65px;font-size:18px;line-height:18px;color:#9c82f5;font-family:'Liberation Mono',monospace;-webkit-text-stroke:0.35px #9c82f5;letter-spacing:-0.240px;">&quot;choices&quot;</span>
<span class="t" style="left:560.36px;top:962.65px;font-size:18px;line-height:18px;color:#e6e6e6;font-family:'Liberation Mono',monospace;-webkit-text-stroke:0.35px #e6e6e6;letter-spacing:-0.240px;">: [</span>
<span class="t" style="left:396.94px;top:997.79px;font-size:18px;line-height:18px;color:#a8a8a8;font-family:'Liberation Mono',monospace;-webkit-text-stroke:0.35px #a8a8a8;letter-spacing:-0.240px;">3</span>
<span class="t" style="left:444.20px;top:997.79px;font-size:18px;line-height:18px;color:#e6e6e6;font-family:'Liberation Mono',monospace;-webkit-text-stroke:0.35px #e6e6e6;letter-spacing:-0.240px;">    {</span>
<span class="t" style="left:396.94px;top:1032.93px;font-size:18px;line-height:18px;color:#a8a8a8;font-family:'Liberation Mono',monospace;-webkit-text-stroke:0.35px #a8a8a8;letter-spacing:-0.240px;">4</span>
<span class="t" style="left:444.20px;top:1032.93px;font-size:18px;line-height:18px;color:#e6e6e6;font-family:'Liberation Mono',monospace;-webkit-text-stroke:0.35px #e6e6e6;letter-spacing:-0.240px;">      </span>
<span class="t" style="left:507.56px;top:1032.93px;font-size:18px;line-height:18px;color:#9c82f5;font-family:'Liberation Mono',monospace;-webkit-text-stroke:0.35px #9c82f5;letter-spacing:-0.240px;">&quot;finish_reason&quot;</span>
<span class="t" style="left:665.96px;top:1032.93px;font-size:18px;line-height:18px;color:#e6e6e6;font-family:'Liberation Mono',monospace;-webkit-text-stroke:0.35px #e6e6e6;letter-spacing:-0.240px;">: </span>
<span class="t" style="left:687.08px;top:1032.93px;font-size:18px;line-height:18px;color:#6fcf97;font-family:'Liberation Mono',monospace;-webkit-text-stroke:0.35px #6fcf97;letter-spacing:-0.240px;">&quot;stop&quot;</span>
<span class="t" style="left:750.44px;top:1032.93px;font-size:18px;line-height:18px;color:#e6e6e6;font-family:'Liberation Mono',monospace;-webkit-text-stroke:0.35px #e6e6e6;letter-spacing:-0.240px;">,</span>
<span class="t" style="left:396.94px;top:1068.07px;font-size:18px;line-height:18px;color:#a8a8a8;font-family:'Liberation Mono',monospace;-webkit-text-stroke:0.35px #a8a8a8;letter-spacing:-0.240px;">5</span>
<span class="t" style="left:444.20px;top:1068.07px;font-size:18px;line-height:18px;color:#e6e6e6;font-family:'Liberation Mono',monospace;-webkit-text-stroke:0.35px #e6e6e6;letter-spacing:-0.240px;">      </span>
<span class="t" style="left:507.56px;top:1068.07px;font-size:18px;line-height:18px;color:#9c82f5;font-family:'Liberation Mono',monospace;-webkit-text-stroke:0.35px #9c82f5;letter-spacing:-0.240px;">&quot;index&quot;</span>
<span class="t" style="left:581.48px;top:1068.07px;font-size:18px;line-height:18px;color:#e6e6e6;font-family:'Liberation Mono',monospace;-webkit-text-stroke:0.35px #e6e6e6;letter-spacing:-0.240px;">: </span>
<span class="t" style="left:602.60px;top:1068.07px;font-size:18px;line-height:18px;color:#f5a524;font-family:'Liberation Mono',monospace;-webkit-text-stroke:0.35px #f5a524;letter-spacing:-0.240px;">0</span>
<span class="t" style="left:613.16px;top:1068.07px;font-size:18px;line-height:18px;color:#e6e6e6;font-family:'Liberation Mono',monospace;-webkit-text-stroke:0.35px #e6e6e6;letter-spacing:-0.240px;">,</span>
<span class="t" style="left:396.94px;top:1103.21px;font-size:18px;line-height:18px;color:#a8a8a8;font-family:'Liberation Mono',monospace;-webkit-text-stroke:0.35px #a8a8a8;letter-spacing:-0.240px;">6</span>
<span class="t" style="left:444.20px;top:1103.21px;font-size:18px;line-height:18px;color:#e6e6e6;font-family:'Liberation Mono',monospace;-webkit-text-stroke:0.35px #e6e6e6;letter-spacing:-0.240px;">      </span>
<span class="t" style="left:507.56px;top:1103.21px;font-size:18px;line-height:18px;color:#9c82f5;font-family:'Liberation Mono',monospace;-webkit-text-stroke:0.35px #9c82f5;letter-spacing:-0.240px;">&quot;logprobs&quot;</span>
<span class="t" style="left:613.16px;top:1103.21px;font-size:18px;line-height:18px;color:#e6e6e6;font-family:'Liberation Mono',monospace;-webkit-text-stroke:0.35px #e6e6e6;letter-spacing:-0.240px;">: </span>
<span class="t" style="left:634.28px;top:1103.21px;font-size:18px;line-height:18px;color:#9c82f5;font-family:'Liberation Mono',monospace;-webkit-text-stroke:0.35px #9c82f5;letter-spacing:-0.240px;">null</span>
<span class="t" style="left:676.52px;top:1103.21px;font-size:18px;line-height:18px;color:#e6e6e6;font-family:'Liberation Mono',monospace;-webkit-text-stroke:0.35px #e6e6e6;letter-spacing:-0.240px;">,</span>
<span class="t" style="left:396.94px;top:1138.35px;font-size:18px;line-height:18px;color:#a8a8a8;font-family:'Liberation Mono',monospace;-webkit-text-stroke:0.35px #a8a8a8;letter-spacing:-0.240px;">7</span>
<span class="t" style="left:444.20px;top:1138.35px;font-size:18px;line-height:18px;color:#e6e6e6;font-family:'Liberation Mono',monospace;-webkit-text-stroke:0.35px #e6e6e6;letter-spacing:-0.240px;">      </span>
<span class="t" style="left:507.56px;top:1138.35px;font-size:18px;line-height:18px;color:#9c82f5;font-family:'Liberation Mono',monospace;-webkit-text-stroke:0.35px #9c82f5;letter-spacing:-0.240px;">&quot;message&quot;</span>
<span class="t" style="left:602.60px;top:1138.35px;font-size:18px;line-height:18px;color:#e6e6e6;font-family:'Liberation Mono',monospace;-webkit-text-stroke:0.35px #e6e6e6;letter-spacing:-0.240px;">: {</span>
<span class="t" style="left:396.94px;top:1173.49px;font-size:18px;line-height:18px;color:#a8a8a8;font-family:'Liberation Mono',monospace;-webkit-text-stroke:0.35px #a8a8a8;letter-spacing:-0.240px;">8</span>
<span class="t" style="left:444.20px;top:1173.49px;font-size:18px;line-height:18px;color:#e6e6e6;font-family:'Liberation Mono',monospace;-webkit-text-stroke:0.35px #e6e6e6;letter-spacing:-0.240px;">        </span>
<span class="t" style="left:528.68px;top:1173.49px;font-size:18px;line-height:18px;color:#9c82f5;font-family:'Liberation Mono',monospace;-webkit-text-stroke:0.35px #9c82f5;letter-spacing:-0.240px;">&quot;content&quot;</span>
<span class="t" style="left:623.72px;top:1173.49px;font-size:18px;line-height:18px;color:#e6e6e6;font-family:'Liberation Mono',monospace;-webkit-text-stroke:0.35px #e6e6e6;letter-spacing:-0.240px;">: </span>
<span class="t" style="left:644.84px;top:1173.49px;font-size:18px;line-height:18px;color:#6fcf97;font-family:'Liberation Mono',monospace;-webkit-text-stroke:0.35px #6fcf97;letter-spacing:-0.240px;">&quot;You sure about that? You sure that&#x27;s not why?...&quot;</span>
<span class="t" style="left:1172.84px;top:1173.49px;font-size:18px;line-height:18px;color:#e6e6e6;font-family:'Liberation Mono',monospace;-webkit-text-stroke:0.35px #e6e6e6;letter-spacing:-0.240px;">,</span>
<span class="t" style="left:396.94px;top:1208.63px;font-size:18px;line-height:18px;color:#a8a8a8;font-family:'Liberation Mono',monospace;-webkit-text-stroke:0.35px #a8a8a8;letter-spacing:-0.240px;">9</span>
<span class="t" style="left:444.20px;top:1208.63px;font-size:18px;line-height:18px;color:#e6e6e6;font-family:'Liberation Mono',monospace;-webkit-text-stroke:0.35px #e6e6e6;letter-spacing:-0.240px;">        </span>
<span class="t" style="left:528.68px;top:1208.63px;font-size:18px;line-height:18px;color:#9c82f5;font-family:'Liberation Mono',monospace;-webkit-text-stroke:0.35px #9c82f5;letter-spacing:-0.240px;">&quot;role&quot;</span>
<span class="t" style="left:592.04px;top:1208.63px;font-size:18px;line-height:18px;color:#e6e6e6;font-family:'Liberation Mono',monospace;-webkit-text-stroke:0.35px #e6e6e6;letter-spacing:-0.240px;">: </span>
<span class="t" style="left:613.16px;top:1208.63px;font-size:18px;line-height:18px;color:#6fcf97;font-family:'Liberation Mono',monospace;-webkit-text-stroke:0.35px #6fcf97;letter-spacing:-0.240px;">&quot;assistant&quot;</span>
<span class="t" style="left:1512.50px;top:500.34px;font-size:18.5px;line-height:18.5px;color:#ffffff;letter-spacing:0.069px;-webkit-text-stroke:0.3px #ffffff;">Trigger details</span>
<span class="t" style="left:1512.50px;top:563.33px;font-size:16.5px;line-height:16.5px;color:#a0a0a0;letter-spacing:-0.518px;-webkit-text-stroke:0.3px #a0a0a0;">Event name</span>
<span class="t" style="left:1512.50px;top:586.39px;font-size:19.5px;line-height:19.5px;color:#f5f5f5;letter-spacing:0.164px;-webkit-text-stroke:0.45px #f5f5f5;">inngest/function.invoked</span>
<span class="t" style="left:1512.50px;top:633.33px;font-size:16.5px;line-height:16.5px;color:#a0a0a0;letter-spacing:-0.540px;-webkit-text-stroke:0.3px #a0a0a0;">Event ID</span>
<span class="t" style="left:1512.50px;top:659.39px;font-size:19px;line-height:19px;color:#f5f5f5;font-family:'Liberation Mono',monospace;letter-spacing:-0.086px;-webkit-text-stroke:0.35px #f5f5f5;">01J5Z9WHDGKJNV337X2WA48WAE</span>
<span class="t" style="left:1512.50px;top:703.33px;font-size:16.5px;line-height:16.5px;color:#a0a0a0;letter-spacing:-0.374px;-webkit-text-stroke:0.3px #a0a0a0;">Received at</span>
<span class="t" style="left:1512.50px;top:728.22px;font-size:19px;line-height:19px;color:#f5f5f5;letter-spacing:0.306px;-webkit-text-stroke:0.45px #f5f5f5;">8/23/2024, 11:43:07 AM</span>
<span class="t" style="left:1512.50px;top:791.32px;font-size:19px;line-height:19px;color:#e6e6e6;letter-spacing:-0.648px;-webkit-text-stroke:0.3px #e6e6e6;">Event</span>
<span class="t" style="left:1512.50px;top:818.22px;font-size:19px;line-height:19px;color:#e6e6e6;letter-spacing:-0.227px;-webkit-text-stroke:0.3px #e6e6e6;">payload</span>
<span class="t" style="left:1679.50px;top:806.15px;font-size:16.6px;line-height:16.6px;color:#f5f5f5;letter-spacing:-0.371px;-webkit-text-stroke:0.3px #f5f5f5;">Send to Dev Server</span>
<span class="t" style="left:1858.30px;top:806.11px;font-size:17px;line-height:17px;color:#f5f5f5;letter-spacing:-0.162px;-webkit-text-stroke:0.3px #f5f5f5;">Copy</span>
<span class="t" style="left:1520.94px;top:879.21px;font-size:18px;line-height:18px;color:#ffffff;font-family:'Liberation Mono',monospace;-webkit-text-stroke:0.35px #ffffff;letter-spacing:-0.240px;">1</span>
<span class="t" style="left:1568.70px;top:879.21px;font-size:18px;line-height:18px;color:#e6e6e6;font-family:'Liberation Mono',monospace;-webkit-text-stroke:0.35px #e6e6e6;letter-spacing:-0.240px;">{</span>
<span class="t" style="left:1520.94px;top:914.47px;font-size:18px;line-height:18px;color:#a8a8a8;font-family:'Liberation Mono',monospace;-webkit-text-stroke:0.35px #a8a8a8;letter-spacing:-0.240px;">2</span>
<span class="t" style="left:1568.70px;top:914.47px;font-size:18px;line-height:18px;color:#e6e6e6;font-family:'Liberation Mono',monospace;-webkit-text-stroke:0.35px #e6e6e6;letter-spacing:-0.240px;">  </span>
<span class="t" style="left:1589.82px;top:914.47px;font-size:18px;line-height:18px;color:#9c82f5;font-family:'Liberation Mono',monospace;-webkit-text-stroke:0.35px #9c82f5;letter-spacing:-0.240px;">&quot;name&quot;</span>
<span class="t" style="left:1653.18px;top:914.47px;font-size:18px;line-height:18px;color:#e6e6e6;font-family:'Liberation Mono',monospace;-webkit-text-stroke:0.35px #e6e6e6;letter-spacing:-0.240px;">: </span>
<span class="t" style="left:1674.30px;top:914.47px;font-size:18px;line-height:18px;color:#6fcf97;font-family:'Liberation Mono',monospace;-webkit-text-stroke:0.35px #6fcf97;letter-spacing:-0.240px;">&quot;inngest/function.invoked&quot;</span>
<span class="t" style="left:1948.86px;top:914.47px;font-size:18px;line-height:18px;color:#e6e6e6;font-family:'Liberation Mono',monospace;-webkit-text-stroke:0.35px #e6e6e6;letter-spacing:-0.240px;">,</span>
<span class="t" style="left:1520.94px;top:949.73px;font-size:18px;line-height:18px;color:#a8a8a8;font-family:'Liberation Mono',monospace;-webkit-text-stroke:0.35px #a8a8a8;letter-spacing:-0.240px;">3</span>
<span class="t" style="left:1568.70px;top:949.73px;font-size:18px;line-height:18px;color:#e6e6e6;font-family:'Liberation Mono',monospace;-webkit-text-stroke:0.35px #e6e6e6;letter-spacing:-0.240px;">  </span>
<span class="t" style="left:1589.82px;top:949.73px;font-size:18px;line-height:18px;color:#9c82f5;font-family:'Liberation Mono',monospace;-webkit-text-stroke:0.35px #9c82f5;letter-spacing:-0.240px;">&quot;data&quot;</span>
<span class="t" style="left:1653.18px;top:949.73px;font-size:18px;line-height:18px;color:#e6e6e6;font-family:'Liberation Mono',monospace;-webkit-text-stroke:0.35px #e6e6e6;letter-spacing:-0.240px;">: {</span>
<span class="t" style="left:1520.94px;top:984.99px;font-size:18px;line-height:18px;color:#a8a8a8;font-family:'Liberation Mono',monospace;-webkit-text-stroke:0.35px #a8a8a8;letter-spacing:-0.240px;">4</span>
<span class="t" style="left:1568.70px;top:984.99px;font-size:18px;line-height:18px;color:#e6e6e6;font-family:'Liberation Mono',monospace;-webkit-text-stroke:0.35px #e6e6e6;letter-spacing:-0.240px;">    </span>
<span class="t" style="left:1610.94px;top:984.99px;font-size:18px;line-height:18px;color:#9c82f5;font-family:'Liberation Mono',monospace;-webkit-text-stroke:0.35px #9c82f5;letter-spacing:-0.240px;">&quot;_inngest&quot;</span>
<span class="t" style="left:1716.54px;top:984.99px;font-size:18px;line-height:18px;color:#e6e6e6;font-family:'Liberation Mono',monospace;-webkit-text-stroke:0.35px #e6e6e6;letter-spacing:-0.240px;">: {</span>
<span class="t" style="left:1520.94px;top:1020.25px;font-size:18px;line-height:18px;color:#a8a8a8;font-family:'Liberation Mono',monospace;-webkit-text-stroke:0.35px #a8a8a8;letter-spacing:-0.240px;">5</span>
<span class="t" style="left:1568.70px;top:1020.25px;font-size:18px;line-height:18px;color:#e6e6e6;font-family:'Liberation Mono',monospace;-webkit-text-stroke:0.35px #e6e6e6;letter-spacing:-0.240px;">      </span>
<span class="t" style="left:1632.06px;top:1020.25px;font-size:18px;line-height:18px;color:#9c82f5;font-family:'Liberation Mono',monospace;-webkit-text-stroke:0.35px #9c82f5;letter-spacing:-0.240px;">&quot;expire&quot;</span>
<span class="t" style="left:1716.54px;top:1020.25px;font-size:18px;line-height:18px;color:#e6e6e6;font-family:'Liberation Mono',monospace;-webkit-text-stroke:0.35px #e6e6e6;letter-spacing:-0.240px;">: </span>
<span class="t" style="left:1737.66px;top:1020.25px;font-size:18px;line-height:18px;color:#f5a524;font-family:'Liberation Mono',monospace;-webkit-text-stroke:0.35px #f5a524;letter-spacing:-0.240px;">0</span>
<span class="t" style="left:1748.22px;top:1020.25px;font-size:18px;line-height:18px;color:#e6e6e6;font-family:'Liberation Mono',monospace;-webkit-text-stroke:0.35px #e6e6e6;letter-spacing:-0.240px;">,</span>
<span class="t" style="left:1520.94px;top:1055.51px;font-size:18px;line-height:18px;color:#a8a8a8;font-family:'Liberation Mono',monospace;-webkit-text-stroke:0.35px #a8a8a8;letter-spacing:-0.240px;">6</span>
<span class="t" style="left:1568.70px;top:1055.51px;font-size:18px;line-height:18px;color:#e6e6e6;font-family:'Liberation Mono',monospace;-webkit-text-stroke:0.35px #e6e6e6;letter-spacing:-0.240px;">      </span>
<span class="t" style="left:1632.06px;top:1055.51px;font-size:18px;line-height:18px;color:#9c82f5;font-family:'Liberation Mono',monospace;-webkit-text-stroke:0.35px #9c82f5;letter-spacing:-0.240px;">&quot;fn_id&quot;</span>
<span class="t" style="left:1705.98px;top:1055.51px;font-size:18px;line-height:18px;color:#e6e6e6;font-family:'Liberation Mono',monospace;-webkit-text-stroke:0.35px #e6e6e6;letter-spacing:-0.240px;">: </span>
<span class="t" style="left:1727.10px;top:1055.51px;font-size:18px;line-height:18px;color:#6fcf97;font-family:'Liberation Mono',monospace;-webkit-text-stroke:0.35px #6fcf97;letter-spacing:-0.240px;">&quot;demo-app-create-chat-complet</span>
<span class="t" style="left:1520.94px;top:1090.77px;font-size:18px;line-height:18px;color:#a8a8a8;font-family:'Liberation Mono',monospace;-webkit-text-stroke:0.35px #a8a8a8;letter-spacing:-0.240px;">7</span>
<span class="t" style="left:1568.70px;top:1090.77px;font-size:18px;line-height:18px;color:#e6e6e6;font-family:'Liberation Mono',monospace;-webkit-text-stroke:0.35px #e6e6e6;letter-spacing:-0.240px;">      </span>
<span class="t" style="left:1632.06px;top:1090.77px;font-size:18px;line-height:18px;color:#9c82f5;font-family:'Liberation Mono',monospace;-webkit-text-stroke:0.35px #9c82f5;letter-spacing:-0.240px;">&quot;gid&quot;</span>
<span class="t" style="left:1684.86px;top:1090.77px;font-size:18px;line-height:18px;color:#e6e6e6;font-family:'Liberation Mono',monospace;-webkit-text-stroke:0.35px #e6e6e6;letter-spacing:-0.240px;">: </span>
<span class="t" style="left:1705.98px;top:1090.77px;font-size:18px;line-height:18px;color:#6fcf97;font-family:'Liberation Mono',monospace;-webkit-text-stroke:0.35px #6fcf97;letter-spacing:-0.240px;">&quot;&quot;</span>
<span class="t" style="left:1727.10px;top:1090.77px;font-size:18px;line-height:18px;color:#e6e6e6;font-family:'Liberation Mono',monospace;-webkit-text-stroke:0.35px #e6e6e6;letter-spacing:-0.240px;">,</span>
<span class="t" style="left:1520.94px;top:1126.03px;font-size:18px;line-height:18px;color:#a8a8a8;font-family:'Liberation Mono',monospace;-webkit-text-stroke:0.35px #a8a8a8;letter-spacing:-0.240px;">8</span>
<span class="t" style="left:1568.70px;top:1126.03px;font-size:18px;line-height:18px;color:#e6e6e6;font-family:'Liberation Mono',monospace;-webkit-text-stroke:0.35px #e6e6e6;letter-spacing:-0.240px;">      </span>
<span class="t" style="left:1632.06px;top:1126.03px;font-size:18px;line-height:18px;color:#9c82f5;font-family:'Liberation Mono',monospace;-webkit-text-stroke:0.35px #9c82f5;letter-spacing:-0.240px;">&quot;name&quot;</span>
<span class="t" style="left:1695.42px;top:1126.03px;font-size:18px;line-height:18px;color:#e6e6e6;font-family:'Liberation Mono',monospace;-webkit-text-stroke:0.35px #e6e6e6;letter-spacing:-0.240px;">: </span>
<span class="t" style="left:1716.54px;top:1126.03px;font-size:18px;line-height:18px;color:#6fcf97;font-family:'Liberation Mono',monospace;-webkit-text-stroke:0.35px #6fcf97;letter-spacing:-0.240px;">&quot;&quot;</span>
<span class="t" style="left:1737.66px;top:1126.03px;font-size:18px;line-height:18px;color:#e6e6e6;font-family:'Liberation Mono',monospace;-webkit-text-stroke:0.35px #e6e6e6;letter-spacing:-0.240px;">,</span>
<span class="t" style="left:1520.94px;top:1161.29px;font-size:18px;line-height:18px;color:#a8a8a8;font-family:'Liberation Mono',monospace;-webkit-text-stroke:0.35px #a8a8a8;letter-spacing:-0.240px;">9</span>
<span class="t" style="left:1568.70px;top:1161.29px;font-size:18px;line-height:18px;color:#e6e6e6;font-family:'Liberation Mono',monospace;-webkit-text-stroke:0.35px #e6e6e6;letter-spacing:-0.240px;">      </span>
<span class="t" style="left:1632.06px;top:1161.29px;font-size:18px;line-height:18px;color:#9c82f5;font-family:'Liberation Mono',monospace;-webkit-text-stroke:0.35px #9c82f5;letter-spacing:-0.240px;">&quot;source_app_id&quot;</span>
<span class="t" style="left:1790.46px;top:1161.29px;font-size:18px;line-height:18px;color:#e6e6e6;font-family:'Liberation Mono',monospace;-webkit-text-stroke:0.35px #e6e6e6;letter-spacing:-0.240px;">: </span>
<span class="t" style="left:1811.58px;top:1161.29px;font-size:18px;line-height:18px;color:#6fcf97;font-family:'Liberation Mono',monospace;-webkit-text-stroke:0.35px #6fcf97;letter-spacing:-0.240px;">&quot;&quot;</span>
<span class="t" style="left:1832.70px;top:1161.29px;font-size:18px;line-height:18px;color:#e6e6e6;font-family:'Liberation Mono',monospace;-webkit-text-stroke:0.35px #e6e6e6;letter-spacing:-0.240px;">,</span>
<span class="t" style="left:1510.38px;top:1196.55px;font-size:18px;line-height:18px;color:#a8a8a8;font-family:'Liberation Mono',monospace;-webkit-text-stroke:0.35px #a8a8a8;letter-spacing:-0.240px;">10</span>
<span class="t" style="left:1568.70px;top:1196.55px;font-size:18px;line-height:18px;color:#e6e6e6;font-family:'Liberation Mono',monospace;-webkit-text-stroke:0.35px #e6e6e6;letter-spacing:-0.240px;">      </span>
<span class="t" style="left:1632.06px;top:1196.55px;font-size:18px;line-height:18px;color:#9c82f5;font-family:'Liberation Mono',monospace;-webkit-text-stroke:0.35px #9c82f5;letter-spacing:-0.240px;">&quot;source_fn_id&quot;</span>
<span class="t" style="left:1779.90px;top:1196.55px;font-size:18px;line-height:18px;color:#e6e6e6;font-family:'Liberation Mono',monospace;-webkit-text-stroke:0.35px #e6e6e6;letter-spacing:-0.240px;">: </span>
<span class="t" style="left:1801.02px;top:1196.55px;font-size:18px;line-height:18px;color:#6fcf97;font-family:'Liberation Mono',monospace;-webkit-text-stroke:0.35px #6fcf97;letter-spacing:-0.240px;">&quot;&quot;</span>
<span class="t" style="left:1822.14px;top:1196.55px;font-size:18px;line-height:18px;color:#e6e6e6;font-family:'Liberation Mono',monospace;-webkit-text-stroke:0.35px #e6e6e6;letter-spacing:-0.240px;">,</span>
</body></html>
